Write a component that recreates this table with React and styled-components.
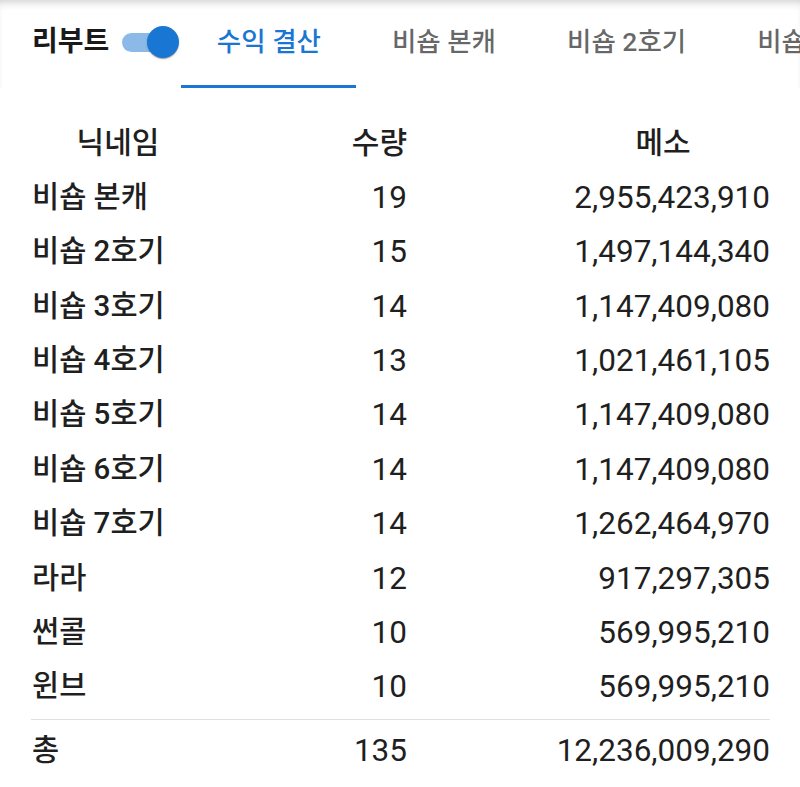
import React from "react";
import styled, { createGlobalStyle } from "styled-components";

const Global = createGlobalStyle`
  html, body { margin: 0; padding: 0; background: #fff; overflow: hidden; }
  body { font-family: "Roboto", "Noto Sans CJK KR", sans-serif; color: rgba(0,0,0,0.87); }
`;

const Page = styled.div`
  width: 800px;
  min-height: 787px;
  background: #fff;
`;

const TopBar = styled.header`
  display: flex;
  align-items: stretch;
  height: 88px;
  padding-left: 32px;
  box-shadow: inset 0 7px 8px -5px rgba(0, 0, 0, 0.2);
  overflow: hidden;
`;

const Brand = styled.div`
  display: flex;
  align-items: center;
  padding-bottom: 4px;
  font-size: 28px;
  font-weight: 700;
  line-height: 1;
  color: #1a1a1a;
  white-space: nowrap;
`;

const SwitchBox = styled.div`
  position: relative;
  align-self: center;
  flex: none;
  width: 58px;
  height: 32px;
  margin-left: 13px;
  margin-bottom: 4px;
`;

const Track = styled.span`
  position: absolute;
  left: 0;
  top: 6.5px;
  width: 54px;
  height: 19px;
  border-radius: 10px;
  background: #8cbae8;
`;

const Thumb = styled.span`
  position: absolute;
  left: 25px;
  top: 0;
  width: 32px;
  height: 32px;
  border-radius: 50%;
  background: #1976d2;
  box-shadow: 0 2px 1px -1px rgba(0,0,0,0.2), 0 1px 1px 0 rgba(0,0,0,0.14), 0 1px 3px 0 rgba(0,0,0,0.12);
`;

const Tabs = styled.nav`
  display: flex;
  flex: 1;
  min-width: 0;
  margin-left: 1px;
  overflow: hidden;
`;

const Tab = styled.div`
  position: relative;
  flex: none;
  display: flex;
  align-items: center;
  padding: 0 35.5px 4px;
  font-size: 26.5px;
  font-weight: 500;
  line-height: 1;
  white-space: nowrap;
  color: ${(p) => (p.$active ? "#1976d2" : "rgba(0,0,0,0.6)")};

  &::after {
    content: "";
    display: ${(p) => (p.$active ? "block" : "none")};
    position: absolute;
    left: 0;
    right: 0;
    bottom: 0;
    height: 3px;
    background: #1976d2;
  }
`;

const Table = styled.section`
  padding: 28px 30px 0 32px;
`;

const Row = styled.div`
  display: flex;
  align-items: center;
  height: 54.4px;
  width: 738px;
`;

const NameCell = styled.div`
  width: 172px;
  flex: none;
  font-size: ${(p) => (p.$head ? "30px" : "29.5px")};
  font-weight: 500;
  line-height: 1;
  white-space: nowrap;
  text-align: ${(p) => (p.$head ? "center" : "left")};
  color: #1f1f1f;
`;

const QtyCell = styled.div`
  width: 203px;
  flex: none;
  text-align: right;
  line-height: 1;
  white-space: nowrap;
  font-size: ${(p) => (p.$head ? "30px" : "31.5px")};
  font-weight: ${(p) => (p.$head ? 500 : 400)};
  color: #1f1f1f;
`;

const MesoCell = styled.div`
  width: 214px;
  flex: none;
  margin-left: auto;
  line-height: 1;
  white-space: nowrap;
  text-align: ${(p) => (p.$head ? "center" : "right")};
  font-size: ${(p) => (p.$head ? "30px" : "31.5px")};
  font-weight: ${(p) => (p.$head ? 500 : 400)};
  color: #1f1f1f;
`;

const Divider = styled.div`
  width: 739px;
  margin: 5px 0 3px -1px;
  height: 1px;
  background: #e0e0e0;
`;

const tabs = ["수익 결산", "비숍 본캐", "비숍 2호기", "비숍 3호기", "비숍 4호기"];

const rows = [
  ["비숍 본캐", 19, "2,955,423,910"],
  ["비숍 2호기", 15, "1,497,144,340"],
  ["비숍 3호기", 14, "1,147,409,080"],
  ["비숍 4호기", 13, "1,021,461,105"],
  ["비숍 5호기", 14, "1,147,409,080"],
  ["비숍 6호기", 14, "1,147,409,080"],
  ["비숍 7호기", 14, "1,262,464,970"],
  ["라라", 12, "917,297,305"],
  ["썬콜", 10, "569,995,210"],
  ["윈브", 10, "569,995,210"],
];

export default function App() {
  return (
    <Page>
      <Global />
      <TopBar>
        <Brand>리부트</Brand>
        <SwitchBox>
          <Track />
          <Thumb />
        </SwitchBox>
        <Tabs>
          {tabs.map((t, i) => (
            <Tab key={t} $active={i === 0}>{t}</Tab>
          ))}
        </Tabs>
      </TopBar>
      <Table>
        <Row>
          <NameCell $head>닉네임</NameCell>
          <QtyCell $head>수량</QtyCell>
          <MesoCell $head>메소</MesoCell>
        </Row>
        {rows.map(([n, q, m]) => (
          <Row key={n}>
            <NameCell>{n}</NameCell>
            <QtyCell>{q}</QtyCell>
            <MesoCell>{m}</MesoCell>
          </Row>
        ))}
        <Divider />
        <Row>
          <NameCell>총</NameCell>
          <QtyCell>135</QtyCell>
          <MesoCell>12,236,009,290</MesoCell>
        </Row>
      </Table>
    </Page>
  );
}
